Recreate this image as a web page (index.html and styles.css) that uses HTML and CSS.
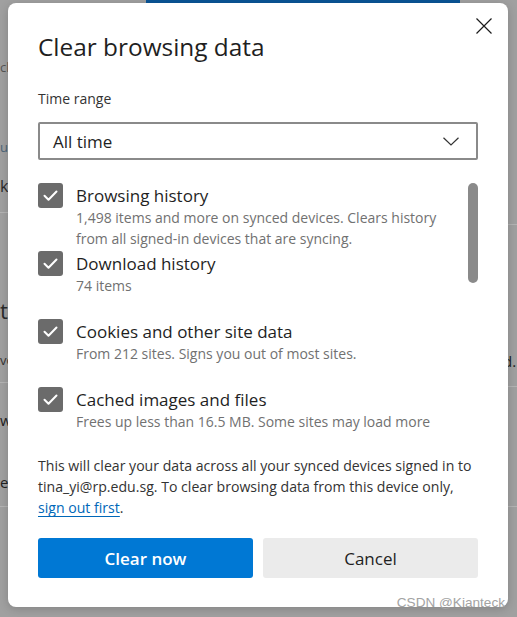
FILE: index.html
```html
<!DOCTYPE html>
<html lang="en">
<head>
<meta charset="utf-8">
<title>Clear browsing data</title>
<link rel="stylesheet" href="styles.css">
</head>
<body>
<div class="backdrop">
  <div class="topbar"><span class="topbar-blue"></span></div>
  <div class="bg-cols">
    <div class="bg-left">
      <div class="bg-row r1"><span class="frag f-ck">ck</span><span class="frag f-u">u</span><span class="frag f-ki">ki</span></div>
      <div class="bg-row r2"><span class="frag f-ta">ta</span><span class="frag f-vo">vo</span></div>
      <div class="bg-row r3"><span class="frag f-w">w</span><span class="frag f-e">e</span></div>
    </div>
    <div class="bg-right">
      <div class="bg-row rr1"></div>
      <div class="bg-row rr2"><span class="frag f-d">d.</span></div>
      <div class="bg-row rr3"></div>
    </div>
  </div>
</div>

<div class="dialog" role="dialog" aria-labelledby="dlg-title">
  <button class="close" aria-label="Close">
    <svg width="16" height="16" viewBox="0 0 16 16"><path d="M0.5 0.5 L15.5 15.5 M15.5 0.5 L0.5 15.5" stroke="#1b1b1b" stroke-width="1.2" fill="none"/></svg>
  </button>
  <h1 class="title" id="dlg-title">Clear browsing data</h1>
  <div class="label">Time range</div>
  <div class="select">
    <span class="select-value">All time</span>
    <svg class="chevron" width="16" height="9" viewBox="0 0 16 9"><path d="M0.5 0.8 L8 8 L15.5 0.8" stroke="#333" stroke-width="1.2" fill="none"/></svg>
  </div>

  <div class="list">
    <div class="items">
      <div class="item">
        <span class="check"><svg width="25" height="25" viewBox="0 0 25 25"><path d="M6.5 12.8 L10.5 16.8 L18.5 8.5" stroke="#fff" stroke-width="2" fill="none" stroke-linecap="round" stroke-linejoin="round"/></svg></span>
        <div class="item-text">
          <div class="item-title">Browsing history</div>
          <div class="item-desc">1,498 items and more on synced devices. Clears history from all signed-in devices that are syncing.</div>
        </div>
      </div>
      <div class="item">
        <span class="check"><svg width="25" height="25" viewBox="0 0 25 25"><path d="M6.5 12.8 L10.5 16.8 L18.5 8.5" stroke="#fff" stroke-width="2" fill="none" stroke-linecap="round" stroke-linejoin="round"/></svg></span>
        <div class="item-text">
          <div class="item-title">Download history</div>
          <div class="item-desc">74 items</div>
        </div>
      </div>
      <div class="item">
        <span class="check"><svg width="25" height="25" viewBox="0 0 25 25"><path d="M6.5 12.8 L10.5 16.8 L18.5 8.5" stroke="#fff" stroke-width="2" fill="none" stroke-linecap="round" stroke-linejoin="round"/></svg></span>
        <div class="item-text">
          <div class="item-title">Cookies and other site data</div>
          <div class="item-desc">From 212 sites. Signs you out of most sites.</div>
        </div>
      </div>
      <div class="item">
        <span class="check"><svg width="25" height="25" viewBox="0 0 25 25"><path d="M6.5 12.8 L10.5 16.8 L18.5 8.5" stroke="#fff" stroke-width="2" fill="none" stroke-linecap="round" stroke-linejoin="round"/></svg></span>
        <div class="item-text">
          <div class="item-title">Cached images and files</div>
          <div class="item-desc">Frees up less than 16.5 MB. Some sites may load more</div>
        </div>
      </div>
    </div>
    <div class="scrolltrack"><span class="thumb"></span></div>
  </div>

  <p class="note">This will clear your data across all your synced devices signed in to tina_yi@rp.edu.sg. To clear browsing data from this device only, <a href="#" class="link">sign out first</a>.</p>

  <div class="actions">
    <button class="btn primary">Clear now</button>
    <button class="btn secondary">Cancel</button>
  </div>
</div>

<div class="watermark">CSDN @Kianteck</div>
</body>
</html>
```

FILE: styles.css
```css
* { box-sizing: border-box; }
html, body { margin: 0; padding: 0; }
body {
  width: 517px;
  height: 617px;
  overflow: hidden;
  background: #a0a0a0;
  font-family: "Open Sans", "Noto Sans", sans-serif;
  position: relative;
}

/* dimmed page behind the dialog */
.backdrop { display: flex; flex-direction: column; height: 617px; }
.topbar { height: 3px; display: flex; }
.topbar-blue { margin-left: 146px; width: 314px; background: #0a5596; }
.bg-cols { flex: 1; display: flex; justify-content: space-between; }
.bg-left { width: 250px; display: flex; flex-direction: column; }
.bg-right { width: 20px; display: flex; flex-direction: column; }
.bg-row { position: relative; border-bottom: 1px solid #b4b4b4; }
.r1 { height: 210px; }
.r2 { height: 170px; }
.r3 { height: 124px; }
.rr1 { height: 222px; }
.rr2 { height: 162px; }
.rr3 { height: 120px; }
.frag { position: absolute; left: 0; color: #3c3c3c; font-size: 13px; line-height: 16px; white-space: nowrap; }
.f-ck { top: 56px; color: #555; }
.f-u { top: 136px; color: #4b6479; }
.f-ki { top: 173px; font-size: 16px; line-height: 20px; color: #2a2a2a; }
.f-ta { top: 84px; font-size: 22px; line-height: 26px; color: #2a2a2a; }
.f-vo { top: 139px; color: #333; }
.f-w { top: 29px; font-size: 15px; color: #222; }
.f-e { top: 91px; font-size: 15px; color: #222; }
.f-d { top: 128px; left: 6px; font-size: 15px; color: #222; }

/* dialog */
.dialog {
  position: absolute;
  left: 8px;
  top: 3px;
  width: 500px;
  height: 604px;
  background: #fff;
  border-radius: 8px;
  box-shadow: 0 2px 10px rgba(0,0,0,0.18);
  padding: 28px 30px 29px 30px;
  display: flex;
  flex-direction: column;
}
.close {
  position: absolute;
  right: 16px;
  top: 15px;
  width: 16px;
  height: 16px;
  padding: 0;
  border: 0;
  background: none;
  display: flex;
}
.title {
  margin: 0;
  font-size: 24.4px;
  line-height: 32px;
  font-weight: 400;
  color: #1f1f1f;
}
.label {
  margin-top: 26px;
  font-size: 14px;
  line-height: 20px;
  color: #333;
}
.select {
  margin-top: 13px;
  height: 38px;
  border: 2px solid #8a8a8a;
  border-radius: 2px;
  display: flex;
  align-items: center;
  justify-content: space-between;
  padding: 0 17px 0 13px;
}
.select-value { font-size: 17px; color: #1f1f1f; }
.chevron { display: block; }

.list {
  margin-top: 23px;
  height: 253px;
  overflow: hidden;
  display: flex;
  gap: 10px;
}
.items { flex: 1; display: flex; flex-direction: column; }
.item { display: flex; gap: 13px; min-height: 68px; padding-bottom: 4px; }
.check {
  flex: none;
  width: 25px;
  height: 25px;
  background: #6b6b6b;
  border-radius: 3px;
  display: flex;
}
.item-text { flex: 1; }
.item-title { margin-top: 2px; font-size: 17px; line-height: 22px; color: #1f1f1f; }
.item-desc { font-size: 14px; line-height: 21px; color: #717171; }
.scrolltrack { flex: none; width: 10px; }
.thumb { display: block; width: 10px; height: 100px; background: #8a8a8a; border-radius: 5px; }

.note {
  margin: 19px 0 0 0;
  font-size: 14.1px;
  line-height: 21px;
  color: #333;
}
.link { color: #0067b8; text-decoration: underline; text-underline-offset: 3px; }

.actions {
  margin-top: auto;
  display: flex;
  gap: 10px;
}
.btn {
  flex: 1;
  height: 40px;
  border: 0;
  border-radius: 3px;
  font-family: inherit;
  font-size: 17px;
}
.primary { background: #0078d4; color: #fff; font-weight: 600; }
.secondary { background: #ebebeb; color: #1f1f1f; }

.watermark {
  position: absolute;
  right: 12px;
  top: 596px;
  font-family: "Liberation Sans", Arial, sans-serif;
  font-size: 13.6px;
  line-height: 14px;
  color: #a3a3a3;
}
```
